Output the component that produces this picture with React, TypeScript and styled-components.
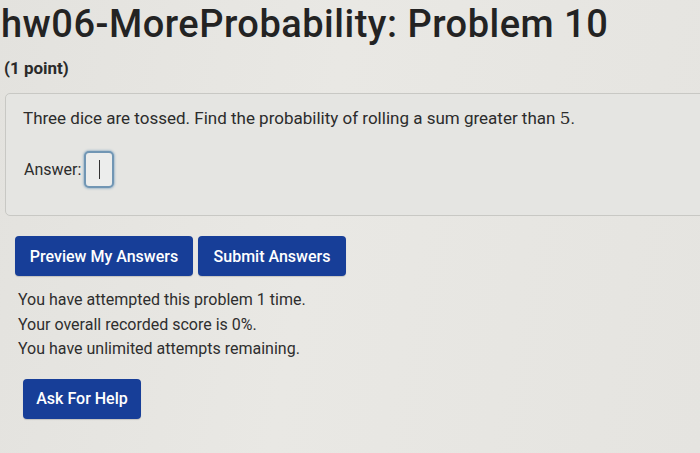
import React from "react";
import styled, { createGlobalStyle } from "styled-components";

const GlobalStyle = createGlobalStyle`
  html, body {
    margin: 0;
    padding: 0;
    background: #e6e5e1;
  }
  body {
    font-family: Roboto, "Liberation Sans", Arial, sans-serif;
    color: #2b2b2b;
  }
`;

const Page = styled.div`
  width: 700px;
  height: 453px;
  overflow: hidden;
  background: linear-gradient(100deg, #e3e2de 0%, #e9e8e4 45%, #e5e4e0 100%);
`;

const Header = styled.div`
  padding: 2px 0 0 1px;
`;

const Title = styled.h1`
  margin: 0;
  font-size: 38px;
  font-weight: 500;
  line-height: 44px;
  letter-spacing: 0.5px;
  color: #232323;
`;

const Points = styled.div`
  margin: 12px 0 0 3px;
  font-size: 17px;
  font-weight: 700;
  line-height: 20px;
  color: #2a2a2a;
`;

const ProblemBox = styled.div`
  margin: 15px -20px 0 5px;
  height: 123px;
  border: 1px solid #c8c8c4;
  border-radius: 5px;
  background: #e5e5e2;
  padding: 12px 0 0 17px;
  box-sizing: border-box;
`;

const Question = styled.p`
  margin: 0;
  font-size: 17px;
  line-height: 24px;
  color: #2c2c2c;
`;

const MathNum = styled.span`
  font-family: "DejaVu Serif", "Liberation Serif", serif;
  font-size: 17px;
`;

const AnswerRow = styled.div`
  display: flex;
  align-items: center;
  gap: 3px;
  margin-top: 21px;
  margin-left: 1px;
`;

const AnswerLabel = styled.span`
  font-size: 16px;
  color: #2c2c2c;
`;

const AnswerInput = styled.div`
  width: 26px;
  height: 33px;
  border: 2px solid #7196b4;
  border-radius: 5px;
  box-shadow: 0 0 2px 1px rgba(90, 140, 180, 0.45);
  background: #ecedec;
  display: flex;
  align-items: center;
  justify-content: center;
`;

const Caret = styled.div`
  width: 1px;
  height: 19px;
  background: #333;
`;

const ButtonRow = styled.div`
  display: flex;
  gap: 5px;
  margin: 20px 0 0 15px;
`;

const Button = styled.button<{ $w: number }>`
  width: ${(p) => p.$w}px;
  height: 40px;
  border: none;
  border-radius: 4px;
  background: #173e98;
  color: #ffffff;
  font-family: Roboto, "Liberation Sans", Arial, sans-serif;
  font-size: 16px;
  font-weight: 500;
  padding: 0;
  box-shadow: 0 1px 1px rgba(0, 0, 0, 0.15);
`;

const Status = styled.div`
  margin: 12px 0 0 18px;
  font-size: 16px;
  line-height: 24.5px;
  color: #2e2e2e;
`;

const HelpWrap = styled.div`
  margin: 17px 0 0 23px;
`;

export default function App() {
  return (
    <Page>
      <GlobalStyle />
      <Header>
        <Title>hw06-MoreProbability: Problem 10</Title>
        <Points>(1 point)</Points>
      </Header>
      <ProblemBox>
        <Question>
          Three dice are tossed. Find the probability of rolling a sum greater than <MathNum>5</MathNum>.
        </Question>
        <AnswerRow>
          <AnswerLabel>Answer:</AnswerLabel>
          <AnswerInput>
            <Caret />
          </AnswerInput>
        </AnswerRow>
      </ProblemBox>
      <ButtonRow>
        <Button $w={178}>Preview My Answers</Button>
        <Button $w={148}>Submit Answers</Button>
      </ButtonRow>
      <Status>
        <div>You have attempted this problem 1 time.</div>
        <div>Your overall recorded score is 0%.</div>
        <div>You have unlimited attempts remaining.</div>
      </Status>
      <HelpWrap>
        <Button $w={118}>Ask For Help</Button>
      </HelpWrap>
    </Page>
  );
}
